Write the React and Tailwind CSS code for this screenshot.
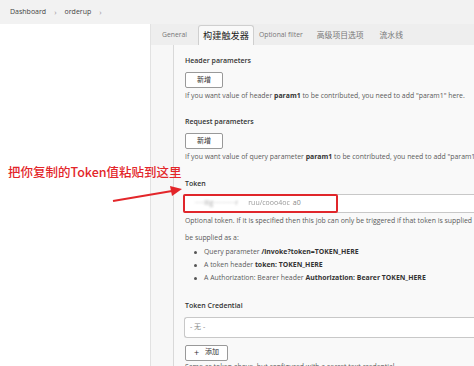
import React from "react"

const Bullet = ({ children }) => (
  <li className="flex items-center h-[13px]">
    <span className="w-[3px] h-[3px] rounded-full bg-[#555] mr-[7px] ml-[9px]"></span>
    <span>{children}</span>
  </li>
)

const Heading = ({ className = "", children }) => (
  <div className={`text-[7px] text-[#333] font-semibold h-[13px] leading-[13px] ${className}`}>{children}</div>
)

export default function App() {
  return (
    <div className="relative w-[474px] h-[366px] overflow-hidden bg-white text-[#333]" style={{ fontFamily: '"Open Sans", "Noto Sans CJK SC", sans-serif' }}>
      {/* breadcrumb */}
      <div className="h-[24px] bg-[#f2f2f2] flex items-center pl-[10px] text-[7px] text-[#444]">
        <span>Dashboard</span>
        <span className="mx-[8px] text-[#999] text-[8px]">›</span>
        <span>orderup</span>
        <span className="mx-[8px] text-[#999] text-[8px]">›</span>
      </div>

      <div className="flex h-[342px]">
        <div className="w-[150px] shrink-0 bg-white"></div>
        <div className="flex-1 min-w-0 border-l border-[#e2e2e2] bg-[#f2f2f2] flex flex-col">
          {/* tabs */}
          <div className="h-[21px] flex items-end pl-[11px] text-[6.8px] text-[#777] bg-[#eeeeee]">
            <div className="h-[19px] flex items-center mr-[11px]">General</div>
            <div className="h-[20px] flex items-center px-[4px] border border-b-0 border-[#cfcfcf] rounded-t-[3px] bg-[#f9f9f9] text-[#222] text-[9.2px] mr-[5px]">构建触发器</div>
            <div className="h-[19px] flex items-center mr-[14px]">Optional filter</div>
            <div className="h-[19px] flex items-center mr-[16px] text-[7.8px]">高级项目选项</div>
            <div className="h-[19px] flex items-center text-[7.8px]">流水线</div>
          </div>

          <div className="flex flex-1 min-h-0">
            <div className="w-[22px] shrink-0 bg-[#f7f7f7]"></div>
            <div className="flex-1 min-w-0 border-l border-[#d9d9d9] bg-[#f9f9f9] pl-[11px] pt-[8.5px] text-[6.9px] text-[#5a5a5a]">
              <Heading>Header parameters</Heading>
              <div className="mt-[5.5px] w-[38px] h-[16px] border border-[#999] rounded-[2px] bg-white flex items-center justify-center text-[7px] text-[#333]">新增</div>
              <div className="mt-[0.5px] h-[13px] leading-[13px] whitespace-nowrap">
                If you want value of header <b className="text-[#333]">param1</b> to be contributed, you need to add "param1" here.
              </div>

              <Heading className="mt-[13px]">Request parameters</Heading>
              <div className="mt-[5.5px] w-[38px] h-[16px] border border-[#999] rounded-[2px] bg-white flex items-center justify-center text-[7px] text-[#333]">新增</div>
              <div className="mt-[0.5px] h-[13px] leading-[13px] whitespace-nowrap">
                If you want value of query parameter <b className="text-[#333]">param1</b> to be contributed, you need to add "param1" here.
              </div>

              <Heading className="mt-[14px]">Token</Heading>
              <div className="relative mt-[4.5px] h-[19px] -ml-[2px] border border-[#c8c8c8] border-r-0 rounded-l-[3px] bg-white">
                <div className="absolute -left-[1px] -top-[1px] w-[155px] h-[19px] border-2 border-[#e0262b] rounded-[2px] flex items-center pl-[10px]">
                  <span className="text-[7px] text-[#aaa] blur-[1.2px]">·····llig············r</span>
                  <span className="text-[7px] text-[#999] blur-[0.7px] ml-[10px]">ruu/cooo4oc</span>
                  <span className="text-[7px] text-[#888] ml-[3px]">a0</span>
                </div>
              </div>
              <div className="-mt-[1px] leading-[17px] whitespace-nowrap">
                Optional token. If it is specified then this job can only be triggered if that token is supplied
              </div>
              <div className="leading-[17px]">be supplied as a:</div>

              <ul>
                <Bullet>Query parameter <b className="text-[#333]">/invoke?token=TOKEN_HERE</b></Bullet>
                <Bullet>A token header <b className="text-[#333]">token: TOKEN_HERE</b></Bullet>
                <Bullet>A Authorization: Bearer header <b className="text-[#333]">Authorization: Bearer TOKEN_HERE</b></Bullet>
              </ul>

              <Heading className="mt-[14px]">Token Credential</Heading>
              <div className="mt-[4.5px] h-[21px] -ml-[1px] border border-[#c8c8c8] border-r-0 rounded-l-[3px] bg-white flex items-center pl-[5px] text-[7px] text-[#888]">- 无 -</div>
              <div className="mt-[7px] w-[43px] h-[16px] border border-[#999] rounded-[2px] bg-white flex items-center justify-center text-[7px] text-[#333]">
                <span className="mr-[6px] text-[9px] leading-none">+</span>添加
              </div>
              <div className="h-[10px] leading-[12px] whitespace-nowrap">
                Same as token above, but configured with a secret text credential.
              </div>
            </div>
          </div>
        </div>
      </div>

      {/* annotation */}
      <div className="absolute left-[8px] top-[162px] text-[12.5px] font-medium text-[#e3262a] whitespace-nowrap leading-[20px]" style={{ fontFamily: '"Noto Sans CJK SC", "Noto Sans", sans-serif' }}>
        把你复制的Token值粘贴到这里
      </div>
      <svg className="absolute left-0 top-0" width="474" height="366">
        <line x1="113" y1="201" x2="172" y2="191" stroke="#e3262a" strokeWidth="2" />
        <polygon points="182,189 170,186 172,196" fill="#e3262a" />
      </svg>
    </div>
  )
}
